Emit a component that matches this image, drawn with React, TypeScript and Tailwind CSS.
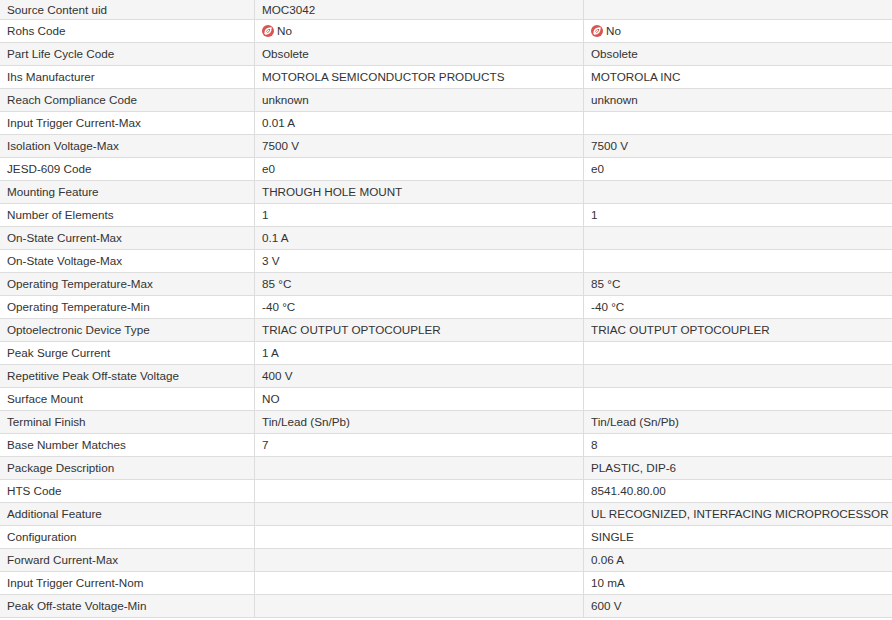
const rows: [string, string, string][] = [
  ["Source Content uid", "MOC3042", ""],
  ["Rohs Code", "NO_ICON", "NO_ICON"],
  ["Part Life Cycle Code", "Obsolete", "Obsolete"],
  ["Ihs Manufacturer", "MOTOROLA SEMICONDUCTOR PRODUCTS", "MOTOROLA INC"],
  ["Reach Compliance Code", "unknown", "unknown"],
  ["Input Trigger Current-Max", "0.01 A", ""],
  ["Isolation Voltage-Max", "7500 V", "7500 V"],
  ["JESD-609 Code", "e0", "e0"],
  ["Mounting Feature", "THROUGH HOLE MOUNT", ""],
  ["Number of Elements", "1", "1"],
  ["On-State Current-Max", "0.1 A", ""],
  ["On-State Voltage-Max", "3 V", ""],
  ["Operating Temperature-Max", "85 °C", "85 °C"],
  ["Operating Temperature-Min", "-40 °C", "-40 °C"],
  ["Optoelectronic Device Type", "TRIAC OUTPUT OPTOCOUPLER", "TRIAC OUTPUT OPTOCOUPLER"],
  ["Peak Surge Current", "1 A", ""],
  ["Repetitive Peak Off-state Voltage", "400 V", ""],
  ["Surface Mount", "NO", ""],
  ["Terminal Finish", "Tin/Lead (Sn/Pb)", "Tin/Lead (Sn/Pb)"],
  ["Base Number Matches", "7", "8"],
  ["Package Description", "", "PLASTIC, DIP-6"],
  ["HTS Code", "", "8541.40.80.00"],
  ["Additional Feature", "", "UL RECOGNIZED, INTERFACING MICROPROCESSOR"],
  ["Configuration", "", "SINGLE"],
  ["Forward Current-Max", "", "0.06 A"],
  ["Input Trigger Current-Nom", "", "10 mA"],
  ["Peak Off-state Voltage-Min", "", "600 V"],
];

function Cell({ v, last }: { v: string; last?: boolean }) {
  return (
    <div className={`flex items-center pl-[7px] whitespace-nowrap overflow-hidden ${last ? "" : "border-r border-[#dddddd]"}`}>
      {v === "NO_ICON" ? (
        <span className="flex items-center gap-[3px]">
          <svg width="12" height="12" viewBox="0 0 12 12">
            <circle cx="6" cy="6" r="6" fill="#d9534f" />
            <path d="M3 8.5 C3 5 5.5 3 9 3 C9 6.5 7 9 3.5 9 Z" fill="none" stroke="#fff" strokeWidth="1.3" />
            <path d="M3 9 L7 5" stroke="#fff" strokeWidth="1.1" />
          </svg>
          No
        </span>
      ) : (
        v
      )}
    </div>
  );
}

export default function App() {
  return (
    <div className="w-[892px] h-[620px] overflow-hidden bg-white text-[11.7px] text-[#333333]" style={{ fontFamily: '"Liberation Sans", Arial, sans-serif' }}>
      {rows.map((r, i) => (
        <div
          key={i}
          className={`grid grid-cols-[255px_329px_1fr] border-b border-[#dddddd] ${i === 0 ? "h-[20px]" : "h-[23px]"} ${i % 2 === 0 ? "bg-[#f5f5f5]" : "bg-white"}`}
        >
          <Cell v={r[0]} />
          <Cell v={r[1]} />
          <Cell v={r[2]} last />
        </div>
      ))}
    </div>
  );
}
